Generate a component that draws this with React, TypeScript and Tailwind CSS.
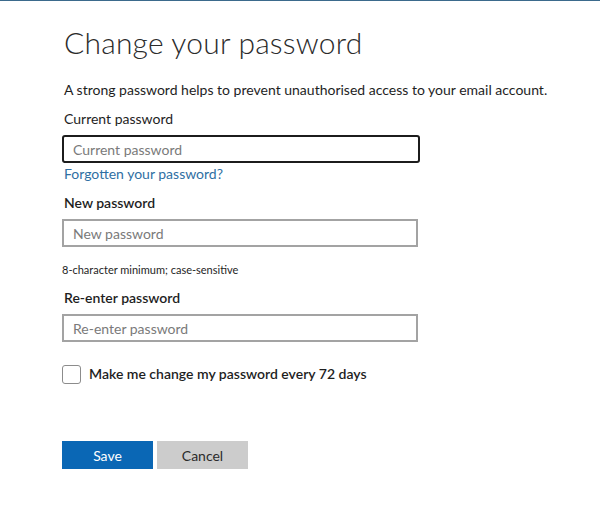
import { useState } from "react"

const font = { fontFamily: "Lato, 'Noto Sans', sans-serif" }

export default function App() {
  const [current, setCurrent] = useState("")
  const [next, setNext] = useState("")
  const [again, setAgain] = useState("")
  const [expire, setExpire] = useState(false)

  return (
    <div className="h-[531px] w-[600px] border-t border-[#3b6a8c] bg-white text-[#1e1e1e]" style={font}>
      <div className="pl-[62px] pt-[23px]">
        <h1 className="pl-[2px] text-[30px] font-light leading-[37px] tracking-[0.2px] text-[#2b2b2b]">Change your password</h1>

        <p className="mt-[19px] pl-[2px] text-[14px] leading-[20px]">
          A strong password helps to prevent unauthorised access to your email account.
        </p>

        {/* Current password */}
        <label className="mt-[9px] block pl-[2px] text-[14px] leading-[20px]">Current password</label>
        <input
          type="password"
          value={current}
          onChange={(e) => setCurrent(e.target.value)}
          placeholder="Current password"
          className="mt-[6px] block h-[28px] w-[358px] rounded-[3px] border-2 border-[#1c1c1c] px-[9px] text-[14px] outline-none placeholder:text-[#7a7a7a]"
        />
        <a href="#" className="mt-[1px] block pl-[2px] text-[14px] leading-[20px] text-[#2f6fa3]">
          Forgotten your password?
        </a>

        {/* New password */}
        <label className="mt-[9px] block pl-[2px] text-[14px] font-semibold leading-[20px]">New password</label>
        <input
          type="password"
          value={next}
          onChange={(e) => setNext(e.target.value)}
          placeholder="New password"
          className="mt-[6px] block h-[28px] w-[356px] border-2 border-[#a3a3a3] px-[9px] text-[14px] outline-none placeholder:text-[#7a7a7a]"
        />
        <p className="mt-[15px] text-[11px] leading-[16px]">8-character minimum; case-sensitive</p>

        {/* Re-enter password */}
        <label className="mt-[10px] block pl-[2px] text-[14px] font-semibold leading-[20px]">Re-enter password</label>
        <input
          type="password"
          value={again}
          onChange={(e) => setAgain(e.target.value)}
          placeholder="Re-enter password"
          className="mt-[6px] block h-[28px] w-[356px] border-2 border-[#a3a3a3] px-[9px] text-[14px] outline-none placeholder:text-[#7a7a7a]"
        />

        <label className="mt-[22px] flex cursor-pointer items-center gap-[8px]">
          <span
            onClick={() => setExpire(!expire)}
            className="flex h-[19px] w-[19px] items-center justify-center rounded-[3px] border border-[#8c8c8c] bg-white text-[12px]"
          >
            {expire ? "✓" : ""}
          </span>
          <span className="text-[14px] font-semibold leading-[20px]">Make me change my password every 72 days</span>
        </label>

        <div className="mt-[57px] flex gap-[4px]">
          <button className="h-[28px] w-[91px] bg-[#0a67b5] text-[14px] text-white">Save</button>
          <button className="h-[28px] w-[91px] bg-[#cccccc] text-[14px] text-[#2b2b2b]">Cancel</button>
        </div>
      </div>
    </div>
  )
}
